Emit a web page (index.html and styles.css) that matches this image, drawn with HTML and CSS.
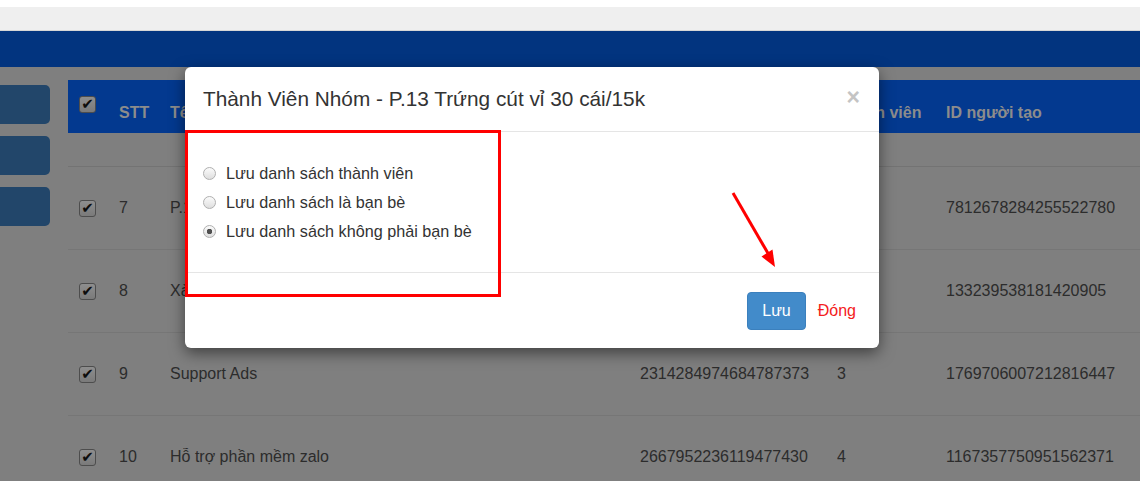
FILE: index.html
```html
<!DOCTYPE html>
<html lang="vi">
<head>
  <meta charset="UTF-8" />
  <title>Thành Viên Nhóm</title>
  <link rel="stylesheet" href="styles.css">
</head>
<body>
  <div class="topline"></div>
  <div class="toolbar"></div>
  <div class="navbar"></div>

  <div class="content">
    <div class="sidebar">
      <div class="side-btn"></div>
      <div class="side-btn"></div>
      <div class="side-btn"></div>
    </div>

    <div class="table">
      <div class="row head">
        <div class="cell cb-cell"><span class="cb"></span></div>
        <div class="cell">STT</div>
        <div class="cell">Tên nhóm</div>
        <div class="cell">ID nhóm</div>
        <div class="cell">Thành viên</div>
        <div class="cell">ID người tạo</div>
      </div>
      <div class="row filter"></div>
      <div class="row item">
        <div class="cell cb-cell"><span class="cb"></span></div>
        <div class="cell">7</div>
        <div class="cell">P.13 Trứng cút vỉ 30 cái/15k</div>
        <div class="cell">2218390145530286651</div>
        <div class="cell">12</div>
        <div class="cell">7812678284255522780</div>
      </div>
      <div class="row item">
        <div class="cell cb-cell"><span class="cb"></span></div>
        <div class="cell">8</div>
        <div class="cell">Xả kho giá rẻ</div>
        <div class="cell">5049172330815749061</div>
        <div class="cell">6</div>
        <div class="cell">133239538181420905</div>
      </div>
      <div class="row item">
        <div class="cell cb-cell"><span class="cb"></span></div>
        <div class="cell">9</div>
        <div class="cell">Support Ads</div>
        <div class="cell">2314284974684787373</div>
        <div class="cell">3</div>
        <div class="cell">1769706007212816447</div>
      </div>
      <div class="row item">
        <div class="cell cb-cell"><span class="cb"></span></div>
        <div class="cell">10</div>
        <div class="cell">Hỗ trợ phần mềm zalo</div>
        <div class="cell">2667952236119477430</div>
        <div class="cell">4</div>
        <div class="cell">1167357750951562371</div>
      </div>
    </div>
  </div>

  <div class="modal">
    <div class="modal-header">
      <h4 class="modal-title">Thành Viên Nhóm - P.13 Trứng cút vỉ 30 cái/15k</h4>
      <span class="close">×</span>
    </div>
    <div class="modal-body">
      <label class="radio"><span class="radio-dot"></span>Lưu danh sách thành viên</label>
      <label class="radio"><span class="radio-dot"></span>Lưu danh sách là bạn bè</label>
      <label class="radio"><span class="radio-dot checked"></span>Lưu danh sách không phải bạn bè</label>
    </div>
    <div class="modal-footer">
      <button class="btn-save">Lưu</button>
      <span class="btn-close">Đóng</span>
    </div>
  </div>

  <div class="mark-box"></div>
  <svg class="mark-arrow" width="60" height="90" viewBox="0 0 60 90">
    <line x1="13" y1="8" x2="49" y2="70" stroke="#f00" stroke-width="3" />
    <polygon points="55,82 41.5,71.5 52.5,64.5" fill="#f00" />
  </svg>
</body>
</html>
```

FILE: styles.css
```css
body, html {
  margin: 0;
  padding: 0;
  width: 100%;
  height: 100%;
  overflow: hidden;
  background: #7f7f7f;
  font-family: 'Liberation Sans', Arial, sans-serif;
  font-size: 16px;
}

.topline {
  height: 7px;
  background: #ffffff;
}

.toolbar {
  height: 23px;
  background: #efefef;
  border-bottom: 1px solid #d6d6d6;
}

.navbar {
  height: 36px;
  background: #02347f;
}

.content {
  display: flex;
  gap: 18px;
  padding-top: 13px;
}

.sidebar {
  width: 50px;
  flex-shrink: 0;
  display: flex;
  flex-direction: column;
  gap: 12px;
  padding-top: 5px;
}

.side-btn {
  height: 39px;
  background: #22466a;
  border-radius: 0 5px 5px 0;
}

.table {
  flex: 1;
  color: #2c2c2c;
}

.row {
  display: grid;
  grid-template-columns: 51px 51px 470px 197px 109px 1fr;
}

.row.head {
  height: 53px;
  background: #03398f;
  color: #8c8c8c;
  font-weight: bold;
}

.row.head .cell {
  padding-top: 22px;
  line-height: 22px;
}

.row.head .cb-cell {
  padding-top: 16px;
}

.row.filter {
  height: 33px;
  border-bottom: 1px solid #737373;
}

.row.item {
  height: 82px;
  border-bottom: 1px solid #767676;
  align-items: center;
}

.cell {
  white-space: nowrap;
  overflow: hidden;
}

.cb-cell {
  padding-left: 11px;
  display: flex;
}

.cb {
  width: 17px;
  height: 17px;
  box-sizing: border-box;
  border: 1px solid #4d4d4d;
  border-radius: 3px;
  background: linear-gradient(#8e8e8e, #7a7a7a);
  display: flex;
  align-items: center;
  justify-content: center;
}

.cb::after {
  content: '✔';
  font-family: 'DejaVu Sans', sans-serif;
  font-weight: bold;
  font-size: 15px;
  line-height: 1;
  color: #0d0d0d;
}

/* modal over the list */
.modal {
  position: absolute;
  left: 185px;
  top: 67px;
  width: 694px;
  background: #fff;
  border-radius: 6px;
  box-shadow: 0 5px 15px rgba(0, 0, 0, 0.5);
  color: #333;
}

.modal-header {
  display: flex;
  justify-content: space-between;
  align-items: flex-start;
  padding: 18px 19px 18px 18px;
  border-bottom: 1px solid #e5e5e5;
}

.modal-title {
  margin: 0;
  font-size: 20.8px;
  font-weight: normal;
  line-height: 28px;
}

.close {
  font-size: 23px;
  font-weight: bold;
  line-height: 16px;
  color: #c4c4c4;
  padding-top: 4px;
}

.modal-body {
  padding: 30px 18px 30px;
  display: flex;
  flex-direction: column;
  gap: 7px;
}

.radio {
  display: flex;
  align-items: center;
  gap: 10px;
  line-height: 22px;
  font-size: 16.2px;
  color: #333;
}

.radio-dot {
  width: 13px;
  height: 13px;
  box-sizing: border-box;
  border-radius: 50%;
  border: 1px solid #b0b0b0;
  background: linear-gradient(#fbfbfb, #dedede);
}

.radio-dot.checked {
  background: radial-gradient(circle, #4f4f4f 0 2.5px, transparent 3px), linear-gradient(#fbfbfb, #dedede);
}

.modal-footer {
  display: flex;
  justify-content: flex-end;
  align-items: center;
  gap: 12px;
  padding: 19px 23px 18px 18px;
  border-top: 1px solid #e5e5e5;
}

.btn-save {
  height: 38px;
  padding: 0 14px;
  background: #428bca;
  border: 1px solid #3b80bd;
  border-radius: 4px;
  color: #fff;
  font-family: 'Liberation Sans', Arial, sans-serif;
  font-size: 16px;
}

.btn-close {
  color: #f42020;
  font-size: 16px;
}

/* red annotation */
.mark-box {
  position: absolute;
  left: 185px;
  top: 130px;
  width: 316px;
  height: 167px;
  box-sizing: border-box;
  border: 3px solid #f00;
}

.mark-arrow {
  position: absolute;
  left: 720px;
  top: 185px;
}
```
